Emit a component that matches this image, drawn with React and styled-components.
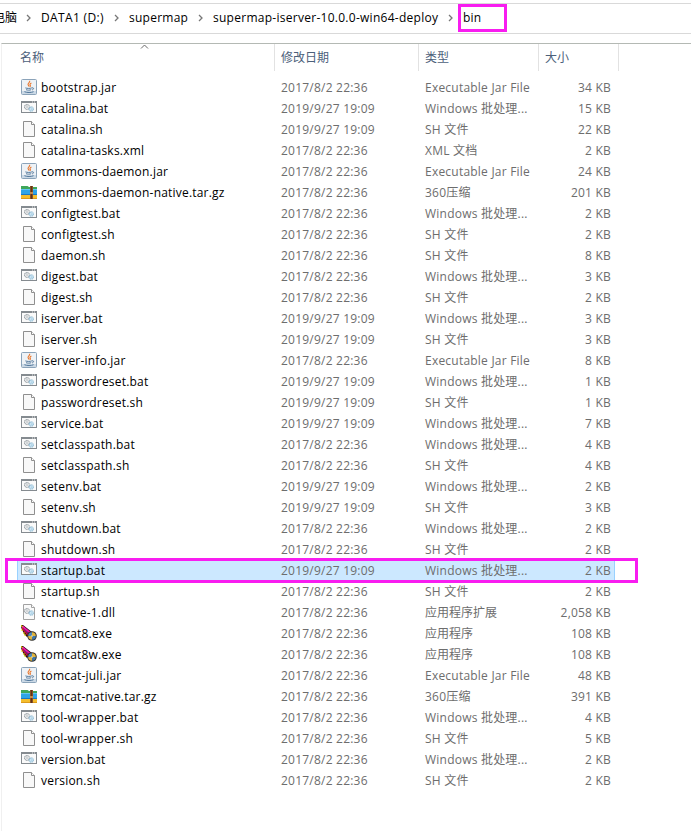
import styled, { createGlobalStyle } from 'styled-components';

const OLD = '2017/8/2 22:36';
const NEW = '2019/9/27 19:09';

const TYPES = {
  jar: 'Executable Jar File',
  bat: 'Windows 批处理...',
  sh: 'SH 文件',
  xml: 'XML 文档',
  zip: '360压缩',
  dll: '应用程序扩展',
  exe: '应用程序',
};

const CRUMBS = [
  { label: '电脑', width: 48, spacing: 0 },
  { label: 'DATA1 (D:)', width: 88, spacing: 0.35 },
  { label: 'supermap', width: 84, spacing: 0.25 },
  { label: 'supermap-iserver-10.0.0-win64-deploy', width: 250, spacing: 0.27 },
];

const FILES = [
  ['bootstrap.jar', OLD, 'jar', '34'],
  ['catalina.bat', NEW, 'bat', '15'],
  ['catalina.sh', NEW, 'sh', '22'],
  ['catalina-tasks.xml', OLD, 'xml', '2'],
  ['commons-daemon.jar', OLD, 'jar', '24'],
  ['commons-daemon-native.tar.gz', OLD, 'zip', '201'],
  ['configtest.bat', OLD, 'bat', '2'],
  ['configtest.sh', OLD, 'sh', '2'],
  ['daemon.sh', OLD, 'sh', '8'],
  ['digest.bat', OLD, 'bat', '3'],
  ['digest.sh', OLD, 'sh', '2'],
  ['iserver.bat', NEW, 'bat', '3'],
  ['iserver.sh', NEW, 'sh', '3'],
  ['iserver-info.jar', OLD, 'jar', '8'],
  ['passwordreset.bat', NEW, 'bat', '1'],
  ['passwordreset.sh', NEW, 'sh', '1'],
  ['service.bat', NEW, 'bat', '7'],
  ['setclasspath.bat', OLD, 'bat', '4'],
  ['setclasspath.sh', OLD, 'sh', '4'],
  ['setenv.bat', NEW, 'bat', '2'],
  ['setenv.sh', NEW, 'sh', '3'],
  ['shutdown.bat', OLD, 'bat', '2'],
  ['shutdown.sh', OLD, 'sh', '2'],
  ['startup.bat', NEW, 'bat', '2'],
  ['startup.sh', OLD, 'sh', '2'],
  ['tcnative-1.dll', OLD, 'dll', '2,058'],
  ['tomcat8.exe', OLD, 'exe', '108'],
  ['tomcat8w.exe', OLD, 'exe', '108'],
  ['tomcat-juli.jar', OLD, 'jar', '48'],
  ['tomcat-native.tar.gz', OLD, 'zip', '391'],
  ['tool-wrapper.bat', OLD, 'bat', '4'],
  ['tool-wrapper.sh', OLD, 'sh', '5'],
  ['version.bat', OLD, 'bat', '2'],
  ['version.sh', OLD, 'sh', '2'],
];

const SELECTED = 'startup.bat';

const JarIcon = () => (
  <>
    <rect x="0.5" y="0.5" width="15" height="15" rx="1" fill="#eef2f6" stroke="#8ba3b9" />
    <path d="M1 12h14v3H1z" fill="#cbd9e6" />
    <path
      d="M8.6 1.8c1 1.6-2.4 2.4-1.5 4 .3.7.9 1 .7 1.8M10.4 4c-1.4.8-1.9 1.5-1.1 2.4.4.5 0 1-.4 1.4"
      fill="none"
      stroke="#e8772e"
      strokeWidth="1.1"
    />
    <path
      d="M4.4 8.9c1.8.7 4.8.7 6.4 0M5 10.7c1.6.6 3.8.6 5.2 0M10.9 8.9c2.4-.6 2 1.6.2 2M3.4 12.7c2.4 1.1 7 1.1 9.2 0"
      fill="none"
      stroke="#54799c"
    />
  </>
);

const Gears = () => (
  <>
    <circle cx="6" cy="7" r="2.4" fill="#f3f4f5" stroke="#939ba0" strokeWidth="1.1" strokeDasharray="1.1 .4" />
    <circle cx="6" cy="7" r=".7" fill="#939ba0" />
    <circle cx="10.2" cy="9" r="2.1" fill="#d9eef9" stroke="#86b6d2" strokeWidth="1.1" strokeDasharray="1.1 .4" />
    <circle cx="10.2" cy="9" r=".6" fill="#6ea9c9" />
  </>
);

const BatIcon = () => (
  <>
    <rect x="0.5" y="1.5" width="15" height="11" fill="#fafafa" stroke="#858b90" />
    <path d="M0 1h16v2H0z" fill="#858b90" />
    <path d="M11 2h1M13 2h1" stroke="#fff" strokeWidth=".8" />
    <Gears />
  </>
);

const PageIcon = () => (
  <>
    <path d="M2.5.5h8l3 3v12h-11z" fill="#f8f8f8" stroke="#8f8f8f" />
    <path d="M10.5.5v3h3" fill="#fff" stroke="#8f8f8f" />
  </>
);

const DllIcon = () => (
  <>
    <path d="M2.5.5h8l3 3v12h-11z" fill="#fafafa" stroke="#a2a2a2" />
    <path d="M10.5.5v3h3" fill="#fff" stroke="#a2a2a2" />
    <Gears />
  </>
);

const ZipIcon = () => (
  <>
    <path d="M0 2h6.5L8 3h8v3H0z" fill="#3fa75a" />
    <path d="M0 5h16v6H0z" fill="#2fa4e7" />
    <path d="M0 5h16v1H0z" fill="#63c3f3" />
    <path d="M0 10h16v1H0z" fill="#1b78c4" />
    <path d="M0 11h16v4H0z" fill="#f4bd2c" />
    <path d="M0 14h16v1H0z" fill="#dc9a1b" />
    <path d="M9 2h3v13H9z" fill="#8a4f24" />
    <path d="M10 2h1v13h-1z" fill="#5e3317" />
    <path d="M9 8h3v2H9z" fill="#c78a4a" />
  </>
);

const ExeIcon = () => (
  <>
    <path d="M0 0h2l9 7-5 5-3-3-3-7z" fill="#2a0a14" />
    <path d="M0 .5l3 2.500M0 5h2M2 8h2M3 10h2" stroke="#f2e600" strokeWidth="1.2" />
    <path d="M1.500 1.500l8 6.500" stroke="#ee17a6" strokeWidth="1.800" />
    <path d="M1 3l6 7" stroke="#c5173c" strokeWidth="1.500" />
    <path d="M3 4l5 5" stroke="#6b23b5" strokeWidth=".8" />
    <circle cx="11" cy="11" r="4.8" fill="#34322b" />
    <path d="M11 7.200A3.800 3.800 0 0 0 7.200 11H11z" fill="#4c87bd" />
    <path d="M11 7.200a3.800 3.800 0 0 1 3.800 3.800H11z" fill="#e2b53b" />
    <path d="M7.200 11a3.800 3.800 0 0 0 3.800 3.800V11z" fill="#e2b53b" />
    <path d="M14.800 11a3.800 3.800 0 0 1-3.800 3.800V11z" fill="#3f77ab" />
    <circle cx="11" cy="11" r="1" fill="#cfc79b" />
  </>
);

const ICONS = {
  jar: JarIcon,
  bat: BatIcon,
  sh: PageIcon,
  xml: PageIcon,
  zip: ZipIcon,
  dll: DllIcon,
  exe: ExeIcon,
};

const FileRow = ({ file }) => {
  const [name, date, kind, size] = file;
  const Icon = ICONS[kind];
  const selected = name === SELECTED;
  const cjkOnly = kind === 'dll' || kind === 'exe';

  return (
    <Row $selected={selected}>
      <NameCell>
        <FileIcon viewBox="0 0 16 16">
          <Icon />
        </FileIcon>
        <FileName>{name}</FileName>
      </NameCell>
      <DateCell>{date}</DateCell>
      <TypeCell $spacing={cjkOnly ? 0 : 0.22}>{TYPES[kind]}</TypeCell>
      <SizeCell>{size} KB</SizeCell>
      {selected && <RowMark />}
    </Row>
  );
};

const App = () => (
  <Window>
    <GlobalStyle />
    <AddressBar>
      {CRUMBS.map(({ label, width, spacing }) => (
        <Crumb key={label} $width={width} $spacing={spacing}>
          {label}
          <Chevron viewBox="0 0 5 8">
            <path d="M1 1l3 3-3 3" />
          </Chevron>
        </Crumb>
      ))}
      <CurrentCrumb>bin</CurrentCrumb>
    </AddressBar>
    <Pane>
      <Header>
        <HeaderCell $first>
          名称
          <SortArrow viewBox="0 0 9 5">
            <path d="M1 4.5L4.5 1 8 4.5" />
          </SortArrow>
        </HeaderCell>
        <HeaderCell>修改日期</HeaderCell>
        <HeaderCell>类型</HeaderCell>
        <HeaderCell>大小</HeaderCell>
      </Header>
      <List>
        {FILES.map((file) => (
          <FileRow key={file[0]} file={file} />
        ))}
      </List>
    </Pane>
  </Window>
);

export default App;

const GlobalStyle = createGlobalStyle`
  * {
    box-sizing: border-box;
  }
  body {
    margin: 0;
    background: #fff;
    overflow: hidden;
  }
`;

const Window = styled.div`
  width: 691px;
  height: 831px;
  padding-top: 3px;
  display: flex;
  flex-direction: column;
  overflow: hidden;
  background: #fff;
  color: #000;
  font-family: 'Open Sans', 'Noto Sans CJK SC', sans-serif;
  font-size: 12px;
  white-space: nowrap;
`;

const AddressBar = styled.div`
  display: flex;
  flex: none;
  height: 31px;
  margin-bottom: 9px;
  padding-bottom: 1px;
  border-top: 1px solid #d9d9d9;
  border-bottom: 1px solid #d9d9d9;
  line-height: 20px;
`;

const Crumb = styled.div`
  display: flex;
  flex: none;
  align-items: center;
  justify-content: space-between;
  width: ${({ $width }) => $width}px;
  padding-right: 10px;
  letter-spacing: ${({ $spacing }) => $spacing}px;

  &:first-child {
    margin-left: -7px;
  }
`;

const Chevron = styled.svg`
  width: 5px;
  height: 8px;
  fill: none;
  stroke: #777;
  stroke-width: 1.3;
`;

const CurrentCrumb = styled.div`
  display: flex;
  align-items: center;
  width: 49px;
  height: 28px;
  margin-left: -5px;
  padding-left: 2px;
  border: 3px solid #f81df0;
  letter-spacing: 0.25px;
`;

const Pane = styled.div`
  flex: 1;
  margin-left: 1px;
  border-top: 1px solid #b4b9b4;
  border-left: 1px solid #f0f0f0;
`;

const Header = styled.div`
  display: grid;
  grid-template-columns: 273px 144px 120px 80px;
  height: 27px;
`;

const HeaderCell = styled.div`
  position: relative;
  padding-left: ${({ $first }) => ($first ? 18 : 6)}px;
  border-right: 1px solid #e2e2e2;
  color: #4c607a;
  line-height: 27px;
`;

const SortArrow = styled.svg`
  position: absolute;
  top: 0;
  left: 138px;
  width: 9px;
  height: 5px;
  fill: none;
  stroke: #6b6b6b;
`;

const List = styled.div`
  padding: 6px 0 0 15px;
`;

const Row = styled.div`
  position: relative;
  display: grid;
  grid-template-columns: 257px 144px 120px 77px;
  width: 598px;
  height: 21px;
  line-height: 21px;
  color: #6d6d6d;
  background: ${({ $selected }) => ($selected ? '#cce8ff' : 'transparent')};
  box-shadow: ${({ $selected }) => ($selected ? 'inset 0 0 0 1px #99d1ff' : 'none')};
`;

const NameCell = styled.div`
  display: flex;
  align-items: center;
  padding-left: 4px;
  color: #000;
`;

const FileIcon = styled.svg`
  flex: none;
  width: 16px;
  height: 16px;
  margin: 0 4px 1px 0;
`;

const FileName = styled.span`
  letter-spacing: 0.2px;
`;

const DateCell = styled.div`
  padding-left: 7px;
  letter-spacing: 0.22px;
`;

const TypeCell = styled.div`
  padding-left: 7px;
  letter-spacing: ${({ $spacing }) => $spacing}px;
`;

const SizeCell = styled.div`
  padding-right: 4px;
  text-align: right;
  letter-spacing: 0.2px;
`;

const RowMark = styled.div`
  position: absolute;
  top: -2px;
  left: -12px;
  width: 633px;
  height: 25px;
  border: 3px solid #f81df0;
`;
